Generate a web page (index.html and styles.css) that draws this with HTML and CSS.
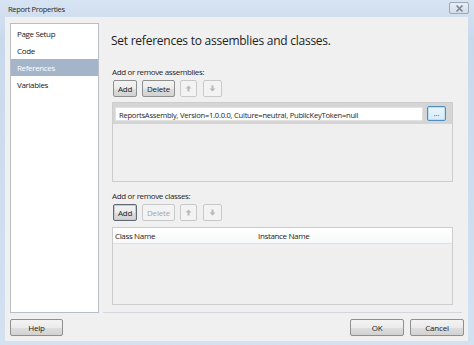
FILE: index.html
```html
<!DOCTYPE html>
<html lang="en">

<head>
	<meta charset="UTF-8">
	<meta name="viewport" content="width=device-width, initial-scale=1.0">
	<title>Report Properties</title>
	<link rel="stylesheet" href="styles.css">
</head>

<body>
	<div class="window">
		<div class="titlebar">
			<span class="title">Report Properties</span>
			<span class="close">
				<svg width="9" height="7" viewBox="0 0 9 7">
					<path d="M1.5 0.5 L7.5 6.5 M7.5 0.5 L1.5 6.5" stroke="#7d8794" stroke-width="1.6" fill="none" />
				</svg>
			</span>
		</div>
		<div class="client">
			<div class="main">
				<ul class="nav">
					<li>Page Setup</li>
					<li>Code</li>
					<li class="active">References</li>
					<li>Variables</li>
				</ul>
				<div class="panel">
					<h1>Set references to assemblies and classes.</h1>

					<div class="label">Add or remove assemblies:</div>
					<div class="toolbar">
						<button class="btn small">Add</button>
						<button class="btn medium">Delete</button>
						<button class="btn arrow" disabled>
							<svg width="7" height="7" viewBox="0 0 7 7">
								<path d="M3.5 0.5 L6.5 3.5 L4.5 3.5 L4.5 6.5 L2.5 6.5 L2.5 3.5 L0.5 3.5 Z" fill="#b9b9b9" />
							</svg>
						</button>
						<button class="btn arrow wide" disabled>
							<svg width="7" height="7" viewBox="0 0 7 7">
								<path d="M3.5 6.5 L6.5 3.5 L4.5 3.5 L4.5 0.5 L2.5 0.5 L2.5 3.5 L0.5 3.5 Z" fill="#b9b9b9" />
							</svg>
						</button>
					</div>
					<div class="list assemblies">
						<div class="row selected">
							<div class="field">ReportsAssembly, Version=1.0.0.0, Culture=neutral, PublicKeyToken=null</div>
							<button class="browse">...</button>
						</div>
					</div>

					<div class="label second">Add or remove classes:</div>
					<div class="toolbar">
						<button class="btn small default">Add</button>
						<button class="btn medium" disabled>Delete</button>
						<button class="btn arrow" disabled>
							<svg width="7" height="7" viewBox="0 0 7 7">
								<path d="M3.5 0.5 L6.5 3.5 L4.5 3.5 L4.5 6.5 L2.5 6.5 L2.5 3.5 L0.5 3.5 Z" fill="#b9b9b9" />
							</svg>
						</button>
						<button class="btn arrow wide" disabled>
							<svg width="7" height="7" viewBox="0 0 7 7">
								<path d="M3.5 6.5 L6.5 3.5 L4.5 3.5 L4.5 0.5 L2.5 0.5 L2.5 3.5 L0.5 3.5 Z" fill="#b9b9b9" />
							</svg>
						</button>
					</div>
					<div class="list classes">
						<div class="header">
							<span class="col-class">Class Name</span>
							<span class="col-instance">Instance Name</span>
						</div>
					</div>
				</div>
			</div>
			<div class="footer">
				<button class="btn wide-btn">Help</button>
				<div class="spacer"></div>
				<button class="btn wide-btn">OK</button>
				<button class="btn wide-btn">Cancel</button>
			</div>
		</div>
	</div>
</body>

</html>
```

FILE: styles.css
```css
body,
ul,
h1 {
	margin: 0;
}

ul {
	padding: 0;
}

body {
	width: 474px;
	height: 345px;
	overflow: hidden;
	font-family: "Open Sans", "Noto Sans", sans-serif;
	font-size: 8px;
	letter-spacing: -0.35px;
	color: #1e1e1e;
	background: #cddcee;
}

.window {
	display: flex;
	flex-direction: column;
	height: 345px;
	padding: 0 6px 4px 5px;
	box-sizing: border-box;
	background: linear-gradient(#d6e3f2, #c9d9ec 40px, #d3e1f1);
}

/* title bar */
.titlebar {
	display: flex;
	align-items: center;
	justify-content: space-between;
	height: 17px;
	padding: 0 0 0 3px;
	margin-top: 1px;
}

.title {
	color: #2b2b2b;
	font-size: 7.6px;
}

.close {
	display: flex;
	align-items: center;
	justify-content: center;
	width: 18px;
	height: 10px;
	margin-right: -1px;
	margin-top: -2px;
	border: 1px solid #9ba8b7;
	border-radius: 2px;
	background: linear-gradient(#e7eef6, #d3dde9);
}

/* client area */
.client {
	display: flex;
	flex-direction: column;
	flex: 1;
	background: #f0f0f0;
	padding: 6px 0 5px 5px;
}

.main {
	display: flex;
	gap: 4px;
	height: 290px;
	padding-right: 6px;
}

.nav {
	width: 89px;
	box-sizing: border-box;
	border: 1px solid #b8bec6;
	background: #fff;
	padding-top: 1px;
	list-style: none;
}

.nav li {
	height: 17px;
	line-height: 17px;
	padding-left: 6px;
	font-size: 8px;
	color: #222;
}

.nav li.active {
	background: #a4b4c9;
	color: #fff;
}

.panel {
	flex: 1;
	box-sizing: border-box;
	border-bottom: 1px solid #d3d7dc;
	padding-left: 9px;
	padding-right: 9px;
}

.panel h1 {
	font-weight: normal;
	font-size: 12px;
	letter-spacing: -0.25px;
	line-height: 16px;
	margin: 10px 0 0 -1px;
	color: #1e1e1e;
}

.label {
	font-size: 8px;
	line-height: 10px;
	margin-top: 18px;
}

.label.second {
	margin-top: 9px;
}

.toolbar {
	display: flex;
	gap: 5px;
	margin-top: 3px;
	padding-left: 1px;
}

.btn {
	height: 17px;
	box-sizing: border-box;
	padding: 0;
	font-family: inherit;
	font-size: 8px;
	letter-spacing: -0.2px;
	color: #1e1e1e;
	border: 1px solid #8e8f8f;
	border-radius: 2px;
	background: linear-gradient(#f3f3f3, #ebebeb 50%, #dedede 51%, #d2d2d2);
}

.btn:disabled {
	color: #a6a6a6;
	border-color: #c7c9cb;
	background: #f3f3f3;
}

.btn.small {
	width: 24px;
}

.btn.medium {
	width: 33px;
}

.btn.arrow {
	display: flex;
	align-items: center;
	justify-content: center;
	width: 17px;
}

.btn.arrow.wide {
	width: 19px;
	margin-left: 1px;
}

.btn.default {
	border-color: #5e6a75;
	box-shadow: inset 0 0 0 1px #c7cbd0;
}

.btn.wide-btn {
	width: 54px;
}

/* lists */
.list {
	box-sizing: border-box;
	border: 1px solid #cdcdcd;
	background: #efefef;
}

.assemblies {
	height: 80px;
	margin-top: 5px;
}

.row.selected {
	display: flex;
	align-items: center;
	gap: 4px;
	height: 21px;
	padding: 0 6px 0 2px;
	background: #d5d5d5;
}

.field {
	flex: 1;
	height: 14px;
	line-height: 14px;
	box-sizing: border-box;
	padding-left: 3px;
	background: #fff;
	border: 1px solid #e2e2e2;
	font-size: 7.6px;
	letter-spacing: -0.25px;
	white-space: nowrap;
	overflow: hidden;
}

.browse {
	width: 19px;
	height: 15px;
	padding: 0;
	box-sizing: border-box;
	border: 1px solid #4f8fbe;
	border-radius: 2px;
	background: linear-gradient(#eaf5fc, #d5ebf8);
	box-shadow: inset 0 0 0 1px #b9e0f4;
	font-family: inherit;
	font-size: 7px;
	line-height: 9px;
	color: #333;
}

.classes {
	height: 78px;
	margin-top: 6px;
}

.header {
	display: flex;
	height: 16px;
	line-height: 16px;
	box-sizing: border-box;
	border-bottom: 1px solid #dfe1e3;
	background: linear-gradient(#fff, #f7f8f9);
	font-size: 8px;
}

.col-class {
	width: 143px;
	padding-left: 2px;
}

/* footer */
.footer {
	display: flex;
	gap: 6px;
	margin-top: 6px;
	padding-right: 4px;
}

.spacer {
	flex: 1;
}

.footer .btn:first-child {
	width: 53px;
}
```
